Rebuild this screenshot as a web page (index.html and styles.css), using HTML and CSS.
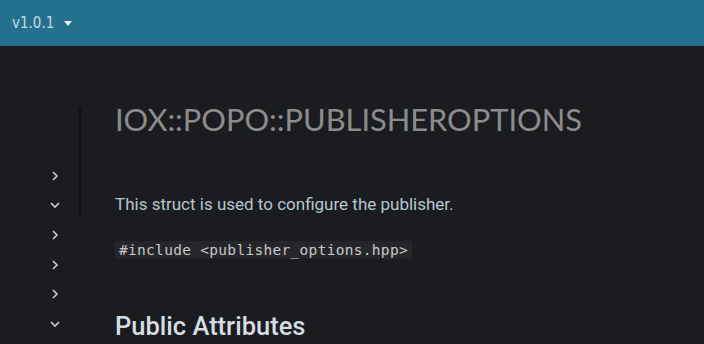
FILE: index.html
```html
<!DOCTYPE html>
<html lang="en">
<head>
    <meta charset="UTF-8">
    <title>iox::popo::PublisherOptions</title>
    <link rel="stylesheet" href="styles.css">
</head>
<body>
    <header class="topbar">
        <span class="version">v1.0.1</span>
        <span class="caret"></span>
    </header>

    <div class="layout">
        <!-- Left - navigation toggles -->
        <nav class="sidebar">
            <div class="rail"></div>
            <ul class="toggles">
                <li><svg width="12" height="12" viewBox="0 0 12 12"><path d="M4 2 L8 6 L4 10" /></svg></li>
                <li><svg width="12" height="12" viewBox="0 0 12 12"><path d="M2 4 L6 8 L10 4" /></svg></li>
                <li><svg width="12" height="12" viewBox="0 0 12 12"><path d="M4 2 L8 6 L4 10" /></svg></li>
                <li><svg width="12" height="12" viewBox="0 0 12 12"><path d="M4 2 L8 6 L4 10" /></svg></li>
                <li><svg width="12" height="12" viewBox="0 0 12 12"><path d="M4 2 L8 6 L4 10" /></svg></li>
                <li><svg width="12" height="12" viewBox="0 0 12 12"><path d="M2 4 L6 8 L10 4" /></svg></li>
            </ul>
        </nav>

        <!-- Main content -->
        <main class="content">
            <h1>IOX::POPO::PUBLISHEROPTIONS</h1>
            <p class="lead">This struct is used to configure the publisher.</p>
            <p><code>#include &lt;publisher_options.hpp&gt;</code></p>
            <h2>Public Attributes</h2>
        </main>
    </div>
</body>
</html>
```

FILE: styles.css
```css
body {
    font-family: Roboto, "Noto Sans", sans-serif;
    background-color: #1b1c1f;
    color: #c9d1d6;
    margin: 0;
    padding: 0;
    overflow: hidden;
}

.topbar {
    height: 46px;
    background-color: #23708f;
    display: flex;
    align-items: center;
    padding-left: 12px;
}

.version {
    color: #c6dbe4;
    font-size: 15px;
    font-family: "DejaVu Sans Condensed", sans-serif;
}

.caret {
    width: 0;
    height: 0;
    margin-left: 10px;
    margin-top: 1px;
    border-left: 4px solid transparent;
    border-right: 4px solid transparent;
    border-top: 5px solid #e6eef2;
}

.layout {
    display: flex;
}

.sidebar {
    width: 115px;
    position: relative;
}

.rail {
    position: absolute;
    left: 79px;
    top: 62px;
    width: 2px;
    height: 108px;
    background-color: #0f1012;
}

.toggles {
    list-style: none;
    margin: 0;
    padding: 115px 0 0 49px;
}

.toggles li {
    height: 29.6px;
    display: flex;
    align-items: center;
}

.toggles svg path {
    fill: none;
    stroke: #cfcfcf;
    stroke-width: 1.6;
}

.content {
    flex: 1;
}

h1 {
    font-family: Lato, sans-serif;
    font-weight: 400;
    font-size: 30.8px;
    color: #8c8c8c;
    margin: 55px 0 0 0;
}

.lead {
    margin: 56px 0 0 0;
    font-size: 17px;
    color: #b7c6cf;
}

p {
    margin: 0;
}

p code {
    display: inline-block;
    margin-top: 27px;
}

code {
    font-family: "DejaVu Sans Mono", monospace;
    font-size: 14.5px;
    letter-spacing: 0.3px;
    background-color: #25262a;
    color: #c8c8c8;
    padding: 1px 4px;
    border-radius: 2px;
}

h2 {
    font-size: 25.5px;
    font-weight: 500;
    color: #d6dde2;
    margin: 52px 0 0 0;
}
```
